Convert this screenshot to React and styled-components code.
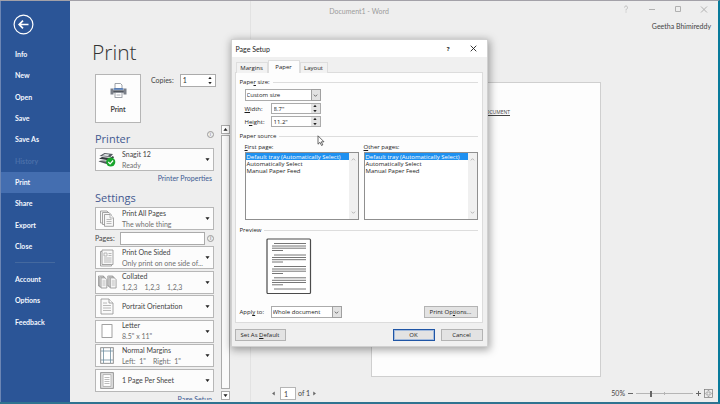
import { useState } from 'react'
import styled, { createGlobalStyle, css } from 'styled-components'

const GlobalStyle = createGlobalStyle`
  * {
    box-sizing: border-box;
  }

  body {
    margin: 0;
    background: #eeeeee;
  }

  body, button, input, select {
    font-family: "Open Sans", "Noto Sans", sans-serif;
    font-size: 7px;
    line-height: 11px;
    color: #444444;
  }

  button, input, select {
    margin: 0;
    padding: 0;
    border-radius: 0;
    outline: none;
  }

  svg {
    display: block;
    flex-shrink: 0;
  }
`

const Window = styled.div`
  position: relative;
  display: flex;
  height: 100vh;
  border-top: 1px solid #a3a1a8;
  border-right: 2px solid #087a9b;
  border-bottom: 2px solid #2f7390;
  background: #eeeeee;
  overflow: hidden;
`

/* ---------- sidebar ---------- */

const Sidebar = styled.nav`
  flex: 0 0 70px;
  display: flex;
  flex-direction: column;
  border-left: 1px solid #6c86b4;
  background: #2b5597;
`

const BackButton = styled.button`
  align-self: flex-start;
  margin: 13px 0 9px 12px;
  border: none;
  background: none;
  cursor: pointer;
`

const NavGroup = styled.div`
  display: grid;
  grid-auto-rows: 1fr;
  height: ${(props) => props.$height};
`

const NavItem = styled.button`
  padding-left: 14px;
  border: none;
  background: ${(props) => (props.$active ? '#446eb0' : 'none')};
  color: ${(props) => (props.disabled ? '#4a6fa9' : '#f4f8ff')};
  font-family: Lato, sans-serif;
  font-weight: 700;
  text-align: left;
  cursor: pointer;
`

const NavLine = styled.hr`
  width: 40px;
  height: 1px;
  margin: 5px 0 6px 14px;
  border: none;
  background: #44699f;
`

/* ---------- print column ---------- */

const PrintColumn = styled.section`
  flex: 0 0 181px;
  display: flex;
  flex-direction: column;
  border-right: 1px solid #e2e2e2;
`

const Title = styled.h1`
  margin: 35px 0 6px 22px;
  font-size: 21px;
  font-weight: 300;
  line-height: 32px;
  color: #333333;
`

const PrintTop = styled.div`
  display: flex;
  align-items: flex-start;
  padding-left: 25px;
`

const PrintButton = styled.button`
  display: flex;
  flex-direction: column;
  align-items: center;
  gap: 6px;
  width: 46px;
  height: 49px;
  padding-top: 8px;
  border: 1px solid #b5b5b5;
  background: #fdfdfd;
  font-family: Lato, sans-serif;
  font-weight: 700;
  cursor: pointer;
`

const Copies = styled.div`
  display: flex;
  align-items: center;
  gap: 6px;
  margin-left: 10px;
  font-family: Lato, sans-serif;
`

const NumberField = styled.div`
  display: flex;
  width: ${(props) => props.$width};
  height: ${(props) => props.$height};
  border: 1px solid #ababab;
  background: #ffffff;
`

const Field = styled.input`
  flex: 1;
  min-width: 0;
  padding-left: 2px;
  border: none;
  background: transparent;
  font-family: Lato, sans-serif;
  color: #333333;
`

const Spinner = styled.div`
  display: flex;
  flex-direction: column;
  width: 9px;
  background: ${(props) => (props.$raised ? '#e4e4e4' : 'none')};
`

const SpinButton = styled.button`
  flex: 1;
  display: flex;
  align-items: center;
  justify-content: center;
  border: none;
  background: none;
`

const Scroller = styled.div`
  flex: 1;
  min-height: 0;
  display: flex;
  gap: 7px;
  margin: 2px 0 2px 25px;
`

const Settings = styled.div`
  flex: 0 0 119px;
  overflow: hidden;
`

const HeadingRow = styled.div`
  display: flex;
  justify-content: space-between;
  padding: 6px 0 0;
  height: 23px;
`

const Heading = styled.h2`
  margin: 0;
  font-size: 11px;
  font-weight: 400;
  line-height: 16px;
  color: #445a91;
`

const Info = styled.span`
  display: flex;
  width: 7px;
  height: 7px;
  align-items: center;
  justify-content: center;
  border: 1px solid #9a9a9a;
  border-radius: 50%;
  color: #777777;
  font-size: 5px;
  line-height: 5px;
`

const Option = styled.button`
  display: flex;
  align-items: center;
  width: 100%;
  height: 23px;
  padding: 0 3px 0 1px;
  border: 1px solid #b7b7b7;
  background: #fcfcfc;
  text-align: left;
  cursor: pointer;
`

const OptionIcon = styled.span`
  flex: 0 0 20px;
  display: flex;
  justify-content: center;
  margin-right: 5px;
`

const OptionText = styled.span`
  flex: 1;
  min-width: 0;
  display: flex;
  flex-direction: column;
  font-family: Lato, sans-serif;
  white-space: pre;
`

const Muted = styled.span`
  color: #6f6f6f;
`

const LinkRow = styled.div`
  padding: 2px 2px 0 0;
  text-align: right;
`

const TextLink = styled.a`
  color: #3c5a92;
  font-family: Lato, sans-serif;
  text-decoration: none;
`

const PagesRow = styled.div`
  display: flex;
  align-items: center;
  gap: 2px;
  margin: 2px 0 1px;
  font-family: Lato, sans-serif;
`

const PagesInput = styled.input`
  width: 85px;
  height: 13px;
  margin-left: auto;
  border: 1px solid #ababab;
  background: #ffffff;
`

const OptionList = styled.div`
  display: flex;
  flex-direction: column;
  justify-content: space-between;
  height: 146px;
`

const Scrollbar = styled.div`
  display: flex;
  flex-direction: column;
  gap: 1px;
  width: 9px;
`

const ScrollButton = styled.button`
  display: flex;
  align-items: center;
  justify-content: center;
  height: 9px;
  border: 1px solid #ababab;
  background: #ffffff;
`

const ScrollThumb = styled.div`
  flex: 1;
  margin-bottom: 1px;
  border: 1px solid #ababab;
  background: #fafafa;
`

/* ---------- preview side ---------- */

const Main = styled.main`
  flex: 1;
  min-width: 0;
  display: flex;
  flex-direction: column;
`

const UserName = styled.div`
  margin-top: 20px;
  padding-right: 7px;
  font-family: Lato, sans-serif;
  text-align: right;
`

const Sheet = styled.article`
  flex: 1;
  margin: 50px 117px 0 120px;
  padding: 24px 90px 0 0;
  border: 1px solid #cfcfcf;
  background: #fdfdfd;
  font-family: "Open Sans", sans-serif;
  font-size: 5px;
  text-align: right;
  text-decoration: underline;
`

const StatusBar = styled.footer`
  display: flex;
  align-items: center;
  justify-content: space-between;
  height: 15px;
  margin: 9px 5px 1px 20px;
  font-family: Lato, sans-serif;
`

const StatusGroup = styled.div`
  display: flex;
  align-items: center;
  gap: ${(props) => props.$gap};
`

const PageInput = styled.input`
  width: 16px;
  height: 13px;
  margin-left: 2px;
  padding-left: 3px;
  border: 1px solid #b5b5b5;
  background: #ffffff;
  font-family: Lato, sans-serif;
`

const IconButton = styled.button`
  display: flex;
  align-items: center;
  justify-content: center;
  border: none;
  background: none;
  cursor: pointer;
`

const Zoom = styled.input`
  appearance: none;
  width: 57px;
  height: 7px;
  background:
    linear-gradient(#b5b5b5, #b5b5b5) center / 1px 3px no-repeat,
    linear-gradient(#b5b5b5, #b5b5b5) center / 100% 1px no-repeat;

  &::-webkit-slider-thumb {
    appearance: none;
    width: 2px;
    height: 6px;
    background: #666666;
  }
`

const TitleBar = styled.header`
  position: absolute;
  top: 3px;
  left: 0;
  right: 0;
  display: grid;
  grid-template-columns: 1fr auto 1fr;
  align-items: start;
  padding: 0 10px;
  color: #9b9b9b;
  font-family: Lato, sans-serif;
`

const DocName = styled.span`
  grid-column: 2;
  padding-top: 2px;
`

const WindowButtons = styled.div`
  display: flex;
  justify-content: flex-end;
  gap: 18px;
  padding-top: 1px;
`

/* ---------- dialog ---------- */

const Overlay = styled.div`
  position: absolute;
  inset: 0;
  display: flex;
  align-items: flex-start;
  justify-content: center;
  padding-top: 38px;
`

const Dialog = styled.div`
  width: 257px;
  border: 1px solid #d0d0d0;
  background: #f0f0f0;
  box-shadow: 1px 2px 8px 1px rgba(0, 0, 0, 0.35);
  color: #1c1c1c;
  font-size: 6px;
  line-height: 8px;

  button, input, select {
    font-family: "Open Sans", sans-serif;
    font-size: 6px;
    line-height: 8px;
    color: #1c1c1c;
  }
`

const DialogTitle = styled.div`
  display: flex;
  align-items: center;
  height: 17px;
  padding: 0 10px 0 4px;
  background: #ffffff;

  h2 {
    flex: 1;
    margin: 0;
    font-family: Lato, sans-serif;
    font-size: 7px;
    font-weight: 400;
  }
`

const DialogActions = styled.div`
  display: flex;
  gap: 20px;
`

const Tabs = styled.div`
  display: flex;
  align-items: flex-end;
  margin: 3px 0 -1px 4px;
`

const Tab = styled.button`
  width: ${(props) => props.$width};
  height: 11px;
  border: 1px solid #dedede;
  border-bottom: none;
  background: #f2f2f2;

  ${(props) => props.$active && css`
    height: 13px;
    background: #fdfdfd;
  `}
`

const Panel = styled.div`
  margin: 0 4px 0 3px;
  padding: 5px 4px 4px 4px;
  border: 1px solid #dcdcdc;
  background: #fdfdfd;
`

const Legend = styled.div`
  display: flex;
  align-items: center;
  gap: 3px;

  &::after {
    content: "";
    flex: 1;
    height: 1px;
    background: #dddddd;
  }
`

const SizeFields = styled.div`
  display: flex;
  flex-direction: column;
  gap: 2px;
  width: 76px;
  margin: 3px 0 5px 5px;
`

const FieldRow = styled.div`
  display: flex;
  align-items: center;
  justify-content: space-between;
`

const SelectBox = styled.div`
  position: relative;
  width: ${(props) => props.$width};
  height: 12px;

  select {
    appearance: none;
    width: 100%;
    height: 100%;
    padding: 0 1px;
    border: 1px solid #ababab;
    background: #ffffff;
  }
`

const SelectArrow = styled.span`
  position: absolute;
  top: 0;
  right: 0;
  bottom: 0;
  display: flex;
  align-items: center;
  justify-content: center;
  width: 10px;
  border: 1px solid #a0a0a0;
  background: #e2e2e2;
  pointer-events: none;
`

const Sources = styled.div`
  display: grid;
  grid-template-columns: 1fr 1fr;
  gap: 5px;
  margin: 3px 0 6px 5px;
`

const ListFrame = styled.div`
  display: flex;
  height: 68px;
  margin-top: 1px;
  border: 1px solid #8f8f8f;
  background: #ffffff;

  select {
    flex: 1;
    min-width: 0;
    padding: 0;
    border: none;
    background: none;
    overflow: hidden;
  }

  option {
    height: 7px;
    min-height: 0;
    padding: 0 0 0 1px;
    line-height: 7px;
  }

  option:checked {
    background: #1e90f0 linear-gradient(#1e90f0, #1e90f0);
    color: #ffffff;
  }
`

const ListScroll = styled.div`
  display: flex;
  flex-direction: column;
  align-items: center;
  justify-content: space-between;
  width: 9px;
  padding: 4px 0;
  background: #f0f0f0;
`

const PreviewSheet = styled.div`
  width: 46px;
  margin: 4px 0 11px 26px;
`

const ApplyRow = styled.div`
  display: flex;
  align-items: center;

  label {
    width: 31px;
  }
`

const DialogButton = styled.button`
  width: ${(props) => props.$width};
  height: 12px;
  margin-left: ${(props) => (props.$push ? 'auto' : '0')};
  border: 1px solid #b3b3b3;
  background: #e3e3e3;
  white-space: nowrap;

  ${(props) => props.$primary && css`
    border-color: #1f55a5;
    box-shadow: inset 0 0 0 1px #a3bbdd;
  `}
`

const DialogFooter = styled.div`
  display: flex;
  gap: 6px;
  padding: 6px 4px 5px 3px;
`

const Pointer = styled.svg`
  position: absolute;
  top: 134px;
  left: 317px;
`

/* ---------- drawings ---------- */

const Arrow = ({ dir = 'down', color = '#222222', size = 5 }) => {
  const turns = { down: 0, left: 90, up: 180, right: 270 }
  return (
    <svg width={size} height={size} viewBox="0 0 6 6" aria-hidden="true">
      <path d="M0.5 1.5h5L3 4.7z" fill={color} transform={`rotate(${turns[dir]} 3 3)`} />
    </svg>
  )
}

const Chevron = ({ up, color = '#555555' }) => (
  <svg width="5" height="5" viewBox="0 0 6 6" fill="none" stroke={color} aria-hidden="true">
    <path d={up ? 'M1 4l2-2 2 2' : 'M1 2l2 2 2-2'} />
  </svg>
)

const BackIcon = () => (
  <svg width="21" height="21" viewBox="0 0 21 21" fill="none" stroke="#ffffff" aria-hidden="true">
    <circle cx="10.5" cy="10.5" r="9.4" strokeWidth="1.2" />
    <path d="M15.5 10.5H6.5M10 6.7L6.2 10.5l3.8 3.8" strokeWidth="1.7" />
  </svg>
)

const PrinterIcon = () => (
  <svg width="17" height="15" viewBox="0 0 17 15" aria-hidden="true">
    <path d="M0.5 5.5h3v2h10v-2h3v6h-3v-2h-10v2h-3z" fill="#7b8089" />
    <rect x="3.5" y="7.5" width="10" height="2" fill="#50555d" />
    <path d="M5 5.5V0.5h5.5l1.5 1.5v3.5z" fill="#ffffff" stroke="#858b93" strokeWidth="0.8" />
    <rect x="3.8" y="5.2" width="9.5" height="1.6" fill="#4b76b3" />
    <rect x="5" y="9.5" width="7" height="5" fill="#ffffff" stroke="#858b93" strokeWidth="0.8" />
    <path d="M6.5 12h4" stroke="#9aa0a8" strokeWidth="0.8" />
  </svg>
)

const SnagitIcon = () => (
  <svg width="18" height="15" viewBox="0 0 18 15" aria-hidden="true">
    <path d="M1.5 4l5-3 8.5 1-2.5 3z" fill="#555b61" />
    <path d="M4 3.4l3-1.4 4.5 0.5-1.5 1.5z" fill="#e7eaec" />
    <path d="M1 6.8l3-1.8 8 1 3-2 1 1.5-4 3z" fill="#34393e" />
    <path d="M0.5 9.5l3-1.5 7 1v2.5l-2 0.5z" fill="#50565b" />
    <path d="M2 8.3l8 1.2" stroke="#dddddd" strokeWidth="0.7" />
    <circle cx="12.7" cy="10" r="4.6" fill="#19a52c" />
    <path d="M10.3 10l1.8 1.9 3-3.4" fill="none" stroke="#ffffff" strokeWidth="1.2" />
  </svg>
)

const AllPagesIcon = () => (
  <svg width="16" height="17" viewBox="0 0 16 17" fill="#f7f7f7" stroke="#8f8f8f" strokeWidth="0.8" aria-hidden="true">
    <path d="M1.5 13V1h6.5l2 2v10z" />
    <path d="M3.5 14.5V2.5h6.5l2 2v10z" />
    <path d="M5.5 16.3V4.5h5.5l3.5 3.5v8.300z" />
    <path d="M11 4.5V8h3.5M7.5 9.5h5M7.5 11.5h5M7.5 13.5h5" stroke="#a8a8a8" />
  </svg>
)

const OneSidedIcon = () => (
  <svg width="16" height="18" viewBox="0 0 16 18" fill="#f7f7f7" stroke="#8f8f8f" strokeWidth="0.8" aria-hidden="true">
    <path d="M1.5 17V2.5H3V1h11v14.5h-1.5V17z" />
    <path d="M3 2.5v13h9.5" />
    <path d="M5 4h3v3H5zM9.5 4.5h3M9.5 6.5h3M5 9h7.5M5 11h7.5M5 13h7.5" stroke="#a8a8a8" />
  </svg>
)

const CollatedIcon = () => (
  <svg width="19" height="14" viewBox="0 0 19 14" fill="#f5f5f5" stroke="#8f8f8f" strokeWidth="0.8" aria-hidden="true">
    {[0, 9.3].map((x) => (
      <g key={x} transform={`translate(${x} 0)`}>
        <path d="M0.5 1h5v10h-5z" />
        <path d="M1.7 2h5v10h-5z" />
        <path d="M3 2.8h4l1.8 1.8v8.4H3z" />
        <path d="M4.5 6h3M4.5 8h3M4.5 10h3" stroke="#b0b0b0" />
      </g>
    ))}
  </svg>
)

const PortraitIcon = () => (
  <svg width="14" height="17" viewBox="0 0 14 17" fill="#fafafa" stroke="#8f8f8f" strokeWidth="0.8" aria-hidden="true">
    <path d="M1 1h8l4 4v11H1z" />
    <path d="M9 1v4h4" />
    <path d="M3 5h4M3 7.5h8M3 10h8M3 12.5h8" stroke="#a8a8a8" />
  </svg>
)

const LetterIcon = () => (
  <svg width="12" height="14" viewBox="0 0 12 14" aria-hidden="true">
    <rect x="1" y="0.6" width="10" height="12.8" fill="#ffffff" stroke="#8a8a8a" strokeWidth="0.8" />
  </svg>
)

const MarginsIcon = () => (
  <svg width="14" height="17" viewBox="0 0 14 17" fill="none" aria-hidden="true">
    <rect x="0.7" y="0.7" width="12.6" height="15.6" fill="#ffffff" stroke="#858585" strokeWidth="0.9" />
    <path d="M3.5 1v15M10.5 1v15M1 4h12M1 13h12" stroke="#6f8ea0" strokeWidth="0.8" />
  </svg>
)

const PerSheetIcon = () => (
  <svg width="14" height="17" viewBox="0 0 14 17" aria-hidden="true">
    <rect x="0.7" y="0.7" width="12.6" height="15.6" fill="#e9e9e9" stroke="#858585" strokeWidth="0.9" />
    <rect x="3" y="2.7" width="8" height="11.6" fill="#ffffff" stroke="#9a9a9a" strokeWidth="0.7" />
    <path d="M4.5 5.5h5M4.5 7.5h5M4.5 9.5h5M4.5 11.5h5" stroke="#9f9f9f" strokeWidth="0.7" />
  </svg>
)

const FitIcon = () => (
  <svg width="9" height="9" viewBox="0 0 9 9" fill="none" stroke="#777777" strokeWidth="0.7" aria-hidden="true">
    <rect x="0.5" y="0.5" width="8" height="8" />
    <rect x="3" y="3" width="3" height="3" stroke="#999999" />
    <path d="M3.5 2.200l1-1 1 1M3.5 6.800l1 1 1-1M2.200 3.500l-1 1 1 1M6.800 3.500l1 1-1 1" />
  </svg>
)

// four paragraphs, the last line of each one is short
const PaperPreview = () => (
  <svg width="46" height="57" viewBox="0 0 46 57" aria-label="Preview">
    <rect x="1" y="1" width="43.5" height="54.5" rx="1" fill="#ffffff" stroke="#4b4b4b" strokeWidth="1.2" />
    {[5, 16.5, 28, 39.3].map((y) => (
      <path
        key={y}
        d={`M8 ${y + 0.5}h32M6 ${y + 3}h34M6 ${y + 5.2}h34M6 ${y + 7.5}h11`}
        stroke="#666666"
        strokeWidth="0.9"
      />
    ))}
    <path d="M8 51h32" stroke="#666666" strokeWidth="0.9" />
  </svg>
)

/* ---------- data ---------- */

const mainItems = ['Info', 'New', 'Open', 'Save', 'Save As', 'History', 'Print', 'Share', 'Export', 'Close']
const moreItems = ['Account', 'Options', 'Feedback']

const settings = [
  { icon: <OneSidedIcon />, title: 'Print One Sided', text: 'Only print on one side of...' },
  { icon: <CollatedIcon />, title: 'Collated', text: '1,2,3    1,2,3    1,2,3' },
  { icon: <PortraitIcon />, title: 'Portrait Orientation' },
  { icon: <LetterIcon />, title: 'Letter', text: '8.5" x 11"' },
  { icon: <MarginsIcon />, title: 'Normal Margins', text: 'Left:  1"    Right:  1"' },
  { icon: <PerSheetIcon />, title: '1 Page Per Sheet' },
]

const trays = ['Default tray (Automatically Select)', 'Automatically Select', 'Manual Paper Feed']

function SettingOption({ icon, title, text }) {
  return (
    <Option type="button" aria-haspopup="listbox">
      <OptionIcon>{icon}</OptionIcon>
      <OptionText>
        <span>{title}</span>
        {text && <Muted>{text}</Muted>}
      </OptionText>
      <Arrow />
    </Option>
  )
}

function NumberBox({ id, width, height, value, raised }) {
  return (
    <NumberField $width={width} $height={height}>
      <Field id={id} type="text" defaultValue={value} />
      <Spinner $raised={raised}>
        <SpinButton type="button" aria-label="Increase"><Arrow dir="up" size={4} /></SpinButton>
        <SpinButton type="button" aria-label="Decrease"><Arrow size={4} /></SpinButton>
      </Spinner>
    </NumberField>
  )
}

function TrayList({ id, children }) {
  return (
    <div>
      <label htmlFor={id}>{children}</label>
      <ListFrame>
        <select id={id} size="3" defaultValue={trays[0]}>
          {trays.map((tray) => <option key={tray}>{tray}</option>)}
        </select>
        <ListScroll>
          <Chevron up color="#a8a8a8" />
          <Chevron color="#a8a8a8" />
        </ListScroll>
      </ListFrame>
    </div>
  )
}

function PageSetup() {
  return (
    <Dialog role="dialog" aria-labelledby="setup-title">
      <DialogTitle>
        <h2 id="setup-title">Page Setup</h2>
        <DialogActions>
          <IconButton type="button" aria-label="Help"><b>?</b></IconButton>
          <IconButton type="button" aria-label="Close">
            <svg width="7" height="7" viewBox="0 0 7 7" stroke="#222222" strokeWidth="0.9"><path d="M0.7 0.7l5.6 5.6M6.3 0.7L0.7 6.3" /></svg>
          </IconButton>
        </DialogActions>
      </DialogTitle>
      <Tabs role="tablist">
        <Tab role="tab" $width="32px">Margins</Tab>
        <Tab role="tab" $width="32px" $active aria-selected="true">Paper</Tab>
        <Tab role="tab" $width="28px">Layout</Tab>
      </Tabs>
      <Panel>
        <Legend><label htmlFor="paper-size">Pape<u>r</u> size:</label></Legend>
        <SizeFields>
          <SelectBox $width="100%">
            <select id="paper-size"><option>Custom size</option></select>
            <SelectArrow><Chevron /></SelectArrow>
          </SelectBox>
          <FieldRow>
            <label htmlFor="width"><u>W</u>idth:</label>
            <NumberBox id="width" width="50px" height="11px" value={'8.7"'} raised />
          </FieldRow>
          <FieldRow>
            <label htmlFor="height">H<u>e</u>ight:</label>
            <NumberBox id="height" width="50px" height="11px" value={'11.2"'} raised />
          </FieldRow>
        </SizeFields>
        <Legend>Paper source</Legend>
        <Sources>
          <TrayList id="first-page"><u>F</u>irst page:</TrayList>
          <TrayList id="other-pages"><u>O</u>ther pages:</TrayList>
        </Sources>
        <Legend>Preview</Legend>
        <PreviewSheet><PaperPreview /></PreviewSheet>
        <ApplyRow>
          <label htmlFor="apply-to">Appl<u>y</u> to:</label>
          <SelectBox $width="71px">
            <select id="apply-to"><option>Whole document</option></select>
            <SelectArrow><Chevron /></SelectArrow>
          </SelectBox>
          <DialogButton type="button" $width="54px" $push>Print Op<u>t</u>ions...</DialogButton>
        </ApplyRow>
      </Panel>
      <DialogFooter>
        <DialogButton type="button" $width="51px">Set As <u>D</u>efault</DialogButton>
        <DialogButton type="button" $width="42px" $push $primary>OK</DialogButton>
        <DialogButton type="button" $width="42px">Cancel</DialogButton>
      </DialogFooter>
    </Dialog>
  )
}

function App() {
  const [page, setPage] = useState('Print')

  return (
    <>
      <GlobalStyle />
      <Window>
        <Sidebar>
          <BackButton type="button" aria-label="Back"><BackIcon /></BackButton>
          <NavGroup $height="213px">
            {mainItems.map((item) => (
              <NavItem
                key={item}
                type="button"
                disabled={item === 'History'}
                $active={item === page}
                onClick={() => setPage(item)}
              >
                {item}
              </NavItem>
            ))}
          </NavGroup>
          <NavLine />
          <NavGroup $height="64px">
            {moreItems.map((item) => <NavItem key={item} type="button">{item}</NavItem>)}
          </NavGroup>
        </Sidebar>

        <PrintColumn>
          <Title>Print</Title>
          <PrintTop>
            <PrintButton type="button"><PrinterIcon />Print</PrintButton>
            <Copies>
              <label htmlFor="copies">Copies:</label>
              <NumberBox id="copies" width="36px" height="13px" value="1" />
            </Copies>
          </PrintTop>
          <Scroller>
            <Settings>
              <HeadingRow>
                <Heading>Printer</Heading>
                <Info>i</Info>
              </HeadingRow>
              <SettingOption icon={<SnagitIcon />} title="Snagit 12" text="Ready" />
              <LinkRow><TextLink href="#properties">Printer Properties</TextLink></LinkRow>
              <HeadingRow><Heading>Settings</Heading></HeadingRow>
              <SettingOption icon={<AllPagesIcon />} title="Print All Pages" text="The whole thing" />
              <PagesRow>
                <label htmlFor="pages">Pages:</label>
                <PagesInput id="pages" type="text" />
                <Info>i</Info>
              </PagesRow>
              <OptionList>
                {settings.map((setting) => <SettingOption key={setting.title} {...setting} />)}
              </OptionList>
              <LinkRow><TextLink href="#setup">Page Setup</TextLink></LinkRow>
            </Settings>
            <Scrollbar>
              <ScrollButton type="button" aria-label="Scroll up"><Arrow dir="up" /></ScrollButton>
              <ScrollThumb />
              <ScrollButton type="button" aria-label="Scroll down"><Arrow /></ScrollButton>
            </Scrollbar>
          </Scroller>
        </PrintColumn>

        <Main>
          <UserName>Geetha Bhimireddy</UserName>
          <Sheet>DOCUMENT</Sheet>
          <StatusBar>
            <StatusGroup $gap="2px">
              <IconButton type="button" aria-label="Previous page"><Arrow dir="left" color="#666666" /></IconButton>
              <PageInput type="text" aria-label="Page" defaultValue="1" />
              <span>of 1</span>
              <IconButton type="button" aria-label="Next page"><Arrow dir="right" color="#666666" /></IconButton>
            </StatusGroup>
            <StatusGroup $gap="3px">
              <label htmlFor="zoom">50%</label>
              <IconButton type="button" aria-label="Zoom out">
                <svg width="5" height="5" viewBox="0 0 5 5" stroke="#666666"><path d="M0 2.5h5" /></svg>
              </IconButton>
              <Zoom id="zoom" type="range" min="0" max="100" defaultValue="25" />
              <IconButton type="button" aria-label="Zoom in">
                <svg width="5" height="5" viewBox="0 0 5 5" stroke="#666666"><path d="M0 2.5h5M2.5 0v5" /></svg>
              </IconButton>
              <IconButton type="button" aria-label="Zoom to page"><FitIcon /></IconButton>
            </StatusGroup>
          </StatusBar>
        </Main>

        <TitleBar>
          <DocName>Document1 - Word</DocName>
          <WindowButtons>
            <IconButton type="button" aria-label="Help">
              <svg width="8" height="8" viewBox="0 0 8 8" fill="none" stroke="#b0b0b0"><path d="M2.5 2.5c0-2 3-2 3 0C5.5 4 4 3.8 4 5.5M4 6.5v1" strokeWidth="0.8" /></svg>
            </IconButton>
            <IconButton type="button" aria-label="Minimize">
              <svg width="8" height="8" viewBox="0 0 8 8" stroke="#b0b0b0"><path d="M1 4.5h6" /></svg>
            </IconButton>
            <IconButton type="button" aria-label="Maximize">
              <svg width="8" height="8" viewBox="0 0 8 8" fill="none" stroke="#b0b0b0"><path d="M1.5 1.5h5v5h-5z" /></svg>
            </IconButton>
            <IconButton type="button" aria-label="Close">
              <svg width="8" height="8" viewBox="0 0 8 8" stroke="#b0b0b0"><path d="M1 1.5l6 6M7 1.5l-6 6" /></svg>
            </IconButton>
          </WindowButtons>
        </TitleBar>

        <Overlay><PageSetup /></Overlay>

        <Pointer width="8" height="12" viewBox="0 0 8 12" aria-hidden="true">
          <path d="M1 0.8v8.4l2-1.9 1.5 3.2 1.3-0.6-1.5-3.1h2.7z" fill="#ffffff" stroke="#444444" strokeWidth="0.8" />
        </Pointer>
      </Window>
    </>
  )
}

export default App
